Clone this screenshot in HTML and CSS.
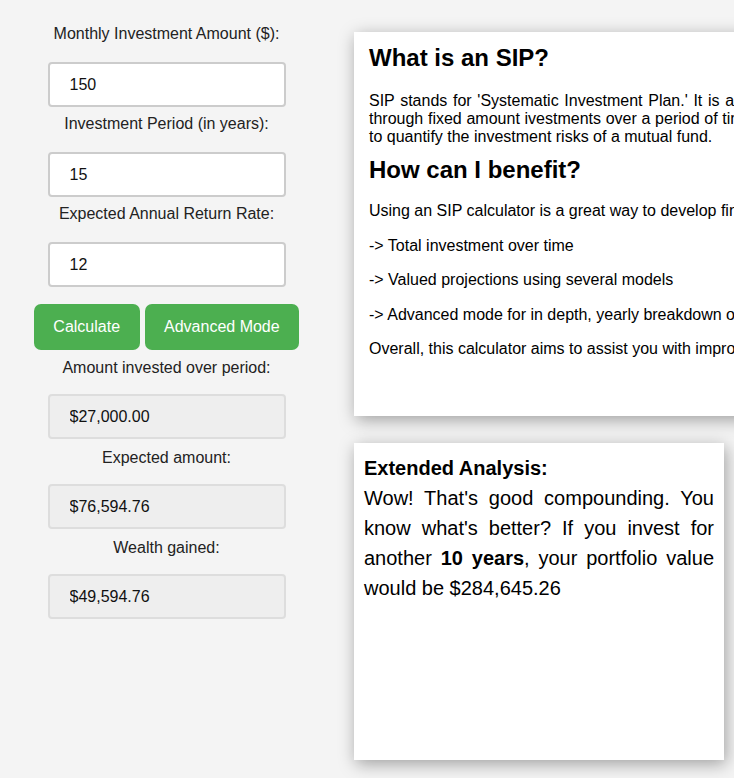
FILE: index.html
```html
<!DOCTYPE html>
<html lang="en">
<head>
    <meta charset="UTF-8">
    <meta name="viewport" content="width=device-width, initial-scale=1.0">
    <title>SIP Calculator</title>
    <link rel="stylesheet" href="styles.css">
</head>
<body>
    <div class="page">
        <!-- Calculator form -->
        <div class="calc">
            <label class="field-label" for="monthly">Monthly Investment Amount ($):</label>
            <input type="text" id="monthly" class="field" value="150">

            <label class="field-label" for="years">Investment Period (in years):</label>
            <input type="text" id="years" class="field" value="15">

            <label class="field-label" for="rate">Expected Annual Return Rate:</label>
            <input type="text" id="rate" class="field" value="12">

            <div class="btn-row">
                <button type="button" class="btn">Calculate</button>
                <button type="button" class="btn">Advanced Mode</button>
            </div>

            <label class="field-label">Amount invested over period:</label>
            <input type="text" class="field output" value="$27,000.00" readonly>

            <label class="field-label">Expected amount:</label>
            <input type="text" class="field output" value="$76,594.76" readonly>

            <label class="field-label">Wealth gained:</label>
            <input type="text" class="field output" value="$49,594.76" readonly>
        </div>

        <!-- Info + analysis cards -->
        <div class="side">
            <div class="card info">
                <h2>What is an SIP?</h2>
                <p class="lead">SIP stands for 'Systematic Investment Plan.' It is a method of investing through fixed amount ivestments over a period of time. It is also the way to quantify the investment risks of a mutual fund.</p>
                <h2>How can I benefit?</h2>
                <p>Using an SIP calculator is a great way to develop financial awareness:</p>
                <p>-&gt; Total investment over time</p>
                <p>-&gt; Valued projections using several models</p>
                <p>-&gt; Advanced mode for in depth, yearly breakdown of your investment</p>
                <p>Overall, this calculator aims to assist you with improving your finances.</p>
            </div>

            <div class="card analysis">
                <p><b>Extended Analysis:</b><br>Wow! That's good compounding. You know what's better? If you invest for another <b>10 years</b>, your portfolio value would be $284,645.26</p>
            </div>
        </div>
    </div>
</body>
</html>
```

FILE: styles.css
```css
* { margin: 0; padding: 0; box-sizing: border-box; }
body {
    font-family: "Liberation Sans", Arial, sans-serif;
    font-size: 16px;
    background-color: #f4f4f4;
    color: #222;
}
.page {
    display: flex;
    align-items: flex-start;
    overflow: hidden;
    min-height: 100vh;
}

/* left column */
.calc {
    flex: none;
    width: 333px;
    padding-top: 25px;
    text-align: center;
}
.field-label {
    display: block;
    line-height: 18px;
}
.field {
    display: block;
    width: 238px;
    height: 45px;
    margin: 19px auto 8px;
    padding: 0 20px;
    font: inherit;
    color: #111;
    background-color: #fff;
    border: 2px solid #ccc;
    border-radius: 4px;
    outline: none;
}
.output {
    margin: 17px auto 10px;
    background-color: #eee;
    border-color: #ddd;
}
.btn-row {
    display: flex;
    justify-content: center;
    gap: 5px;
    margin: 17px 0 9px;
}
.btn {
    height: 46px;
    padding: 0 19.5px;
    font: inherit;
    color: #fff;
    background-color: #4caf50;
    border: none;
    border-radius: 7px;
    cursor: pointer;
}
.btn:hover {
    background-color: #45a049;
}

/* right column */
.side {
    flex: none;
    margin-left: 21px;
}
.card {
    background-color: #fff;
    color: #000;
    box-shadow: 2px 4px 16px rgba(0, 0, 0, 0.35);
}
.info {
    width: 542px;
    height: 384px;
    margin-top: 32px;
    padding: 12px 15px 10px;
    line-height: 1.15;
}
.info h2 {
    font-size: 24px;
    margin: 0;
}
.info p {
    margin-top: 16px;
}
.info h2 + p {
    margin-top: 19px;
}
.info .lead {
    margin: 20px 0 9px;
    text-align: justify;
}
.analysis {
    width: 370px;
    height: 317px;
    margin-top: 27px;
    padding: 10px;
    font-size: 20px;
    line-height: 1.5;
    text-align: justify;
}
```
